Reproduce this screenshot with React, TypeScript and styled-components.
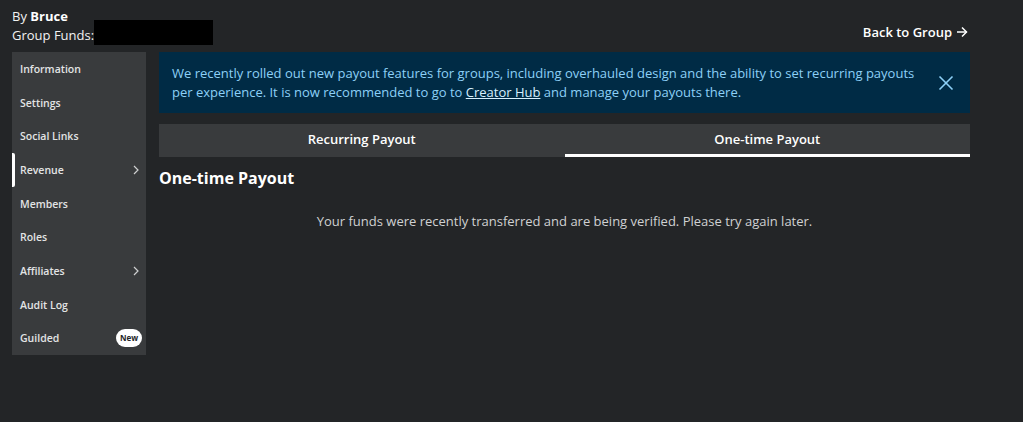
import React from 'react'
import styled, { createGlobalStyle } from 'styled-components'

const GlobalStyle = createGlobalStyle`
  html, body {
    margin: 0;
    padding: 0;
    background: #232527;
  }
  body {
    font-family: 'Open Sans', 'Noto Sans', sans-serif;
    color: #ffffff;
  }
`

const navItems = [
  { label: 'Information' },
  { label: 'Settings' },
  { label: 'Social Links' },
  { label: 'Revenue', chevron: true, active: true },
  { label: 'Members' },
  { label: 'Roles' },
  { label: 'Affiliates', chevron: true },
  { label: 'Audit Log' },
  { label: 'Guilded', badge: 'New' }
]

const Chevron = () => (
  <svg width='6' height='10' viewBox='0 0 6 10'>
    <polyline points='1,1 5,5 1,9' fill='none' stroke='#cfd0d1' strokeWidth='1.2' />
  </svg>
)

const Arrow = () => (
  <svg width='12' height='12' viewBox='0 0 12 12'>
    <line x1='1' y1='6' x2='10.5' y2='6' stroke='#fff' strokeWidth='1.5' />
    <polyline points='6,1.5 10.5,6 6,10.5' fill='none' stroke='#fff' strokeWidth='1.5' />
  </svg>
)

const CloseIcon = () => (
  <svg width='16' height='16' viewBox='0 0 16 16'>
    <line x1='1.5' y1='1.5' x2='14.5' y2='14.5' stroke='#8dd0f7' strokeWidth='1.6' />
    <line x1='14.5' y1='1.5' x2='1.5' y2='14.5' stroke='#8dd0f7' strokeWidth='1.6' />
  </svg>
)

const App = () => {
  return (
    <>
      <GlobalStyle />
      <Page>
        <Header>
          <Owner>
            <div>
              By <b>Bruce</b>
            </div>
            <FundsLine>
              Group Funds:<Redacted />
            </FundsLine>
          </Owner>
          <BackLink>
            Back to Group <Arrow />
          </BackLink>
        </Header>
        <Main>
          <Sidebar>
            {navItems.map((item) => (
              <NavItem key={item.label} active={item.active}>
                <span>{item.label}</span>
                {item.chevron && <Chevron />}
                {item.badge && <Badge>{item.badge}</Badge>}
              </NavItem>
            ))}
          </Sidebar>
          <Content>
            <Banner>
              <BannerText>
                <span>
                  We recently rolled out new payout features for groups, including overhauled design and the ability to set recurring payouts
                  per experience. It is now recommended to go to{' '}
                </span>
                <BannerLink>Creator Hub</BannerLink>
                <span> and manage your payouts there.</span>
              </BannerText>
              <CloseButton>
                <CloseIcon />
              </CloseButton>
            </Banner>
            <Tabs>
              <Tab>Recurring Payout</Tab>
              <Tab active>One-time Payout</Tab>
            </Tabs>
            <Heading>One-time Payout</Heading>
            <Message>
              Your funds were recently transferred and are being verified. Please try again later.
            </Message>
          </Content>
        </Main>
      </Page>
    </>
  )
}

const Page = styled.div`
  width: 958px;
  padding: 6.5px 12px 0;
`

const Header = styled.div`
  display: flex;
  justify-content: space-between;
  align-items: flex-end;
`

const Owner = styled.div`
  font-size: 13px;
  line-height: 19px;
  color: #f2f2f2;
  b {
    font-weight: 700;
    color: #fff;
  }
`

const FundsLine = styled.div`
  display: flex;
  align-items: flex-end;
  margin-top: -6px;
`

const Redacted = styled.span`
  display: inline-block;
  width: 119px;
  height: 25px;
  background: #000;
`

const BackLink = styled.div`
  display: flex;
  align-items: center;
  gap: 4px;
  font-size: 13px;
  font-weight: 600;
  line-height: 18px;
  margin-right: 2px;
  margin-bottom: 3.5px;
`

const Main = styled.div`
  display: flex;
  gap: 13px;
  align-items: flex-start;
  margin-top: 7.5px;
`

const Sidebar = styled.nav`
  width: 134px;
  background: #393b3d;
`

const NavItem = styled.div<{ active?: boolean }>`
  position: relative;
  display: flex;
  align-items: center;
  justify-content: space-between;
  height: 33.7px;
  padding: 0 4px 0 8px;
  font-size: 10.5px;
  font-weight: 600;
  color: #e3e4e5;
  &::before {
    content: '';
    display: ${(p) => (p.active ? 'block' : 'none')};
    position: absolute;
    left: 0;
    top: 0;
    bottom: 0;
    width: 3px;
    border-radius: 0 2px 2px 0;
    background: #fff;
  }
  svg {
    margin-right: 3px;
  }
`

const Badge = styled.span`
  background: #fff;
  color: #232527;
  font-size: 8px;
  font-weight: 700;
  height: 18px;
  line-height: 18px;
  padding: 0 4px;
  border-radius: 9px;
`

const Content = styled.div`
  flex: 1;
  display: flex;
  flex-direction: column;
`

const Banner = styled.div`
  display: flex;
  align-items: center;
  justify-content: space-between;
  background: #002b45;
  padding: 12px 16px 11px 13px;
`

const BannerText = styled.div`
  font-size: 13px;
  line-height: 19px;
  color: #8dd0f7;
  max-width: 760px;
`

const BannerLink = styled.span`
  color: #d6f0ff;
  text-decoration: underline;
`

const CloseButton = styled.div`
  display: flex;
  margin-bottom: 1px;
`

const Tabs = styled.div`
  display: flex;
  margin-top: 11px;
  background: #393b3d;
`

const Tab = styled.div<{ active?: boolean }>`
  flex: 1;
  height: 33px;
  display: flex;
  align-items: center;
  justify-content: center;
  font-size: 13px;
  font-weight: 600;
  color: #fff;
  box-sizing: border-box;
  border-bottom: 3px solid ${(p) => (p.active ? '#fff' : 'transparent')};
  line-height: 1;
`

const Heading = styled.h2`
  margin: 11px 0 0;
  font-size: 16px;
  line-height: 20px;
  font-weight: 700;
  color: #fff;
`

const Message = styled.p`
  margin: 24px 0 0;
  text-align: center;
  font-size: 13px;
  line-height: 18px;
  color: #d0d1d2;
`

export default App
